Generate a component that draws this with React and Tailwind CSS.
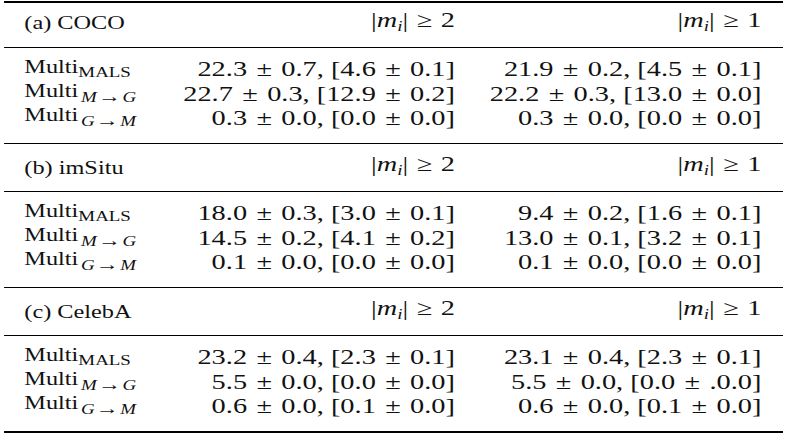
import React from "react";

const sections = [
  {
    title: "(a) COCO",
    rows: [
      ["22.3", "0.7", "4.6", "0.1", "21.9", "0.2", "4.5", "0.1"],
      ["22.7", "0.3", "12.9", "0.2", "22.2", "0.3", "13.0", "0.0"],
      ["0.3", "0.0", "0.0", "0.0", "0.3", "0.0", "0.0", "0.0"],
    ],
  },
  {
    title: "(b) imSitu",
    rows: [
      ["18.0", "0.3", "3.0", "0.1", "9.4", "0.2", "1.6", "0.1"],
      ["14.5", "0.2", "4.1", "0.2", "13.0", "0.1", "3.2", "0.1"],
      ["0.1", "0.0", "0.0", "0.0", "0.1", "0.0", "0.0", "0.0"],
    ],
  },
  {
    title: "(c) CelebA",
    rows: [
      ["23.2", "0.4", "2.3", "0.1", "23.1", "0.4", "2.3", "0.1"],
      ["5.5", "0.0", "0.0", "0.0", "5.5", "0.0", "0.0", ".0.0"],
      ["0.6", "0.0", "0.1", "0.0", "0.6", "0.0", "0.1", "0.0"],
    ],
  },
];

const Pm = () => <span className="mx-[0.33em]">±</span>;

const Cell = ({ a, b, c, d }) => (
  <span className="text-[21px] whitespace-nowrap">
    {a}
    <Pm />
    {b}, [{c}
    <Pm />
    {d}]
  </span>
);

const Label = ({ idx }) => {
  if (idx === 0) {
    return (
      <span className="text-[18px] whitespace-nowrap">
        Multi<span className="text-[14px] align-[-4px]">MALS</span>
      </span>
    );
  }
  const [x, y] = idx === 1 ? ["M", "G"] : ["G", "M"];
  return (
    <span className="text-[18px] whitespace-nowrap">
      Multi
      <span className="text-[14px] align-[-5px] ml-[2px]">
        <i>{x}</i>
        <span className="text-[17px] mx-[1px]">→</span>
        <i>{y}</i>
      </span>
    </span>
  );
};

const MathHead = ({ n }) => (
  <span className="text-[21px] whitespace-nowrap">
    |<i>m</i>
    <i className="text-[14px] align-[-4px]">i</i>|
    <span className="mx-[0.3em]">≥</span>
    {n}
  </span>
);

export default function App() {
  return (
    <div className="w-[787px] h-[443px] bg-white overflow-hidden">
      <div className="w-[583px] origin-left scale-x-[1.35] pt-[1px] text-[#111] font-['Liberation_Serif',serif] leading-[24px]">
        {sections.map((s, si) => (
          <div key={s.title}>
            <div
              className={
                si === 0
                  ? "mx-[3px] border-t-2 border-black"
                  : "mx-[3px] border-t border-black"
              }
            />
            <div
              className={
                si === 0
                  ? "h-[44px] pb-[4px] pl-[18px] grid grid-cols-[110px_209px_227px] items-center"
                  : "h-[47px] pl-[18px] grid grid-cols-[110px_209px_227px] items-center"
              }
            >
              <span className="text-[18px]">{s.title}</span>
              <span className="text-right">
                <MathHead n="2" />
              </span>
              <span className="text-right">
                <MathHead n="1" />
              </span>
            </div>
            <div className="mx-[3px] border-t border-black" />
            <div className="pt-[7px] pb-[16px]">
              {s.rows.map((r, ri) => (
                <div
                  key={ri}
                  className="h-[24px] pl-[18px] grid grid-cols-[110px_209px_227px] items-center"
                >
                  <Label idx={ri} />
                  <span className="text-right">
                    <Cell a={r[0]} b={r[1]} c={r[2]} d={r[3]} />
                  </span>
                  <span className="text-right">
                    <Cell a={r[4]} b={r[5]} c={r[6]} d={r[7]} />
                  </span>
                </div>
              ))}
            </div>
          </div>
        ))}
        <div className="mx-[3px] border-t-2 border-black" />
      </div>
    </div>
  );
}
